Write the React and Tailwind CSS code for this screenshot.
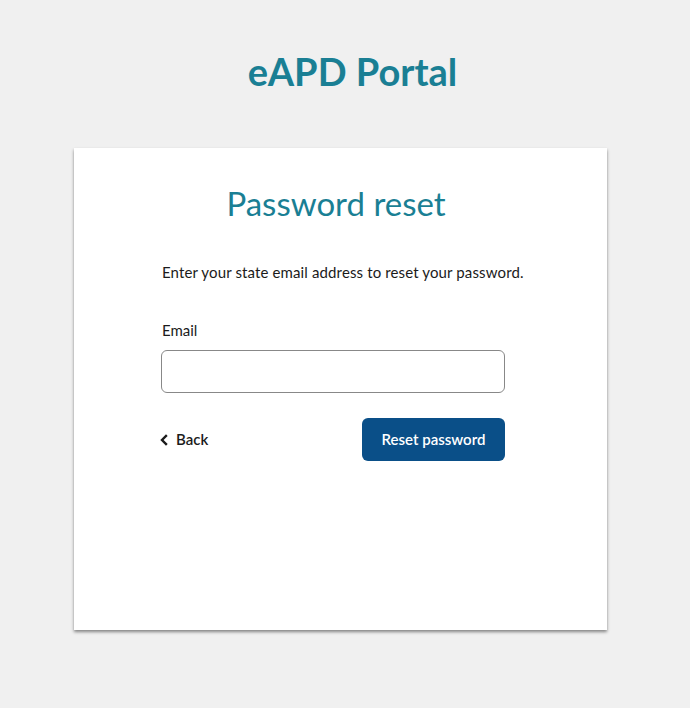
export default function App() {
  const font = { fontFamily: '"Source Sans Pro", Lato, "Noto Sans", sans-serif' };
  return (
    <div className="min-h-[708px] w-full bg-[#f0f0f0] pt-[46px]" style={font}>
      <h1 className="ml-[15px] text-center text-[38px] font-bold leading-[50px] text-[#1a7f94]">eAPD Portal</h1>
      <div className="ml-[74px] mt-[52px] h-[482px] w-[533px] bg-white shadow-[0_2px_3px_rgba(0,0,0,0.45)]">
        <div className="pl-[87px] pr-[102px] pt-[35px]">
          <h2 className="ml-[6px] text-center text-[33px] font-normal leading-[40px] text-[#1a7f94]">Password reset</h2>
          <p className="ml-[1px] mt-[37px] whitespace-nowrap text-[15px] tracking-[0.13px] leading-[24px] text-[#1b1b1b]">Enter your state email address to reset your password.</p>
          <label className="ml-[1px] mt-[34px] block text-[15px] leading-[24px] text-[#1b1b1b]">Email</label>
          <input type="email" className="mt-[8px] block h-[43px] w-[344px] rounded-[6px] border border-[#888] bg-white px-3" />
          <div className="mt-[25px] flex items-center justify-between">
            <button className="ml-[-2px] flex items-center gap-[7px] text-[15px] font-semibold text-[#1b1b1b]">
              <svg width="10" height="12" viewBox="0 0 10 12" fill="none">
                <path d="M7 2 L3 6 L7 10" stroke="#1b1b1b" strokeWidth="2.4" strokeLinecap="square" />
              </svg>
              Back
            </button>
            <button className="h-[43px] w-[143px] rounded-[6px] bg-[#0a4f88] text-[15px] font-semibold text-white">Reset password</button>
          </div>
        </div>
      </div>
    </div>
  );
}
